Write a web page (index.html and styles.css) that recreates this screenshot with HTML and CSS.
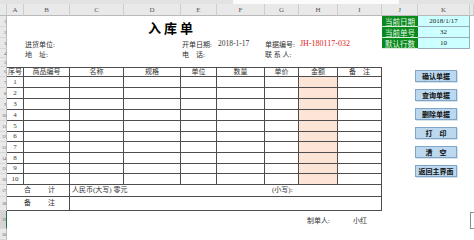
FILE: index.html
```html
<!DOCTYPE html>
<html lang="zh-CN">
<head>
    <meta charset="UTF-8">
    <meta name="viewport" content="width=device-width, initial-scale=1.0">
    <title>入库单</title>
    <link rel="stylesheet" href="styles.css">
</head>
<body>
    <div class="topbar"><div class="namebox"></div></div>
    <div class="sheet">
        <!-- column letters -->
        <div class="colhead"></div>
        <div class="colhead">A</div>
        <div class="colhead">B</div>
        <div class="colhead">C</div>
        <div class="colhead">D</div>
        <div class="colhead">E</div>
        <div class="colhead">F</div>
        <div class="colhead">G</div>
        <div class="colhead">H</div>
        <div class="colhead">I</div>
        <div class="colhead">J</div>
        <div class="colhead">K</div>
        <div class="colhead"></div>

        <!-- row numbers -->
        <div class="rowhead">1</div>
        <div class="rowhead">2</div>
        <div class="rowhead">3</div>
        <div class="rowhead">4</div>
        <div class="rowhead">5</div>
        <div class="rowhead">6</div>
        <div class="rowhead">7</div>
        <div class="rowhead">8</div>
        <div class="rowhead">9</div>
        <div class="rowhead">10</div>
        <div class="rowhead">11</div>
        <div class="rowhead">12</div>
        <div class="rowhead">13</div>
        <div class="rowhead">14</div>
        <div class="rowhead">15</div>
        <div class="rowhead">16</div>
        <div class="rowhead">17</div>
        <div class="rowhead">18</div>
        <div class="rowhead selected">19</div>
        <div class="rowhead">20</div>

        <div class="title">入库单</div>

        <div class="field supplier">进货单位:</div>
        <div class="field open-date">开单日期:</div>
        <div class="field open-date-val">2018-1-17</div>
        <div class="field bill-no">单据编号:</div>
        <div class="field bill-no-val">JH-180117-032</div>
        <div class="field address">地　址:</div>
        <div class="field phone">电　话:</div>
        <div class="field contact">联 系 人:</div>

        <div class="info">
            <div class="key">当前日期</div><div class="val">2018/1/17</div>
            <div class="key">当前单号</div><div class="val">32</div>
            <div class="key">默认行数</div><div class="val">10</div>
        </div>

        <table class="entry">
            <colgroup>
                <col style="width:17px"><col style="width:46px"><col style="width:54px">
                <col style="width:57px"><col style="width:36px"><col style="width:48px">
                <col style="width:34px"><col style="width:39px"><col style="width:44px">
            </colgroup>
            <tr class="hd">
                <td>序号</td><td>商品编号</td><td>名称</td><td>规格</td><td>单位</td><td>数量</td><td>单价</td><td>金额</td><td>备　注</td>
            </tr>
            <tr><td>1</td><td></td><td></td><td></td><td></td><td></td><td></td><td class="amt"></td><td></td></tr>
            <tr><td>2</td><td></td><td></td><td></td><td></td><td></td><td></td><td class="amt"></td><td></td></tr>
            <tr><td>3</td><td></td><td></td><td></td><td></td><td></td><td></td><td class="amt"></td><td></td></tr>
            <tr><td>4</td><td></td><td></td><td></td><td></td><td></td><td></td><td class="amt"></td><td></td></tr>
            <tr><td>5</td><td></td><td></td><td></td><td></td><td></td><td></td><td class="amt"></td><td></td></tr>
            <tr class="low"><td>6</td><td></td><td></td><td></td><td></td><td></td><td></td><td class="amt"></td><td></td></tr>
            <tr><td>7</td><td></td><td></td><td></td><td></td><td></td><td></td><td class="amt"></td><td></td></tr>
            <tr><td>8</td><td></td><td></td><td></td><td></td><td></td><td></td><td class="amt"></td><td></td></tr>
            <tr class="low"><td>9</td><td></td><td></td><td></td><td></td><td></td><td></td><td class="amt"></td><td></td></tr>
            <tr><td>10</td><td></td><td></td><td></td><td></td><td></td><td></td><td class="amt"></td><td></td></tr>
            <tr class="sum">
                <td colspan="2" class="spread">合　　计</td>
                <td colspan="4" class="caps">人民币(大写) 零元</td>
                <td colspan="3" class="lower">(小写):</td>
            </tr>
            <tr class="note">
                <td colspan="2" class="spread">备　　注</td>
                <td colspan="7"></td>
            </tr>
        </table>

        <div class="actions">
            <button class="btn">确认单据</button>
            <button class="btn">查询单据</button>
            <button class="btn">删除单据</button>
            <button class="btn">打　印</button>
            <button class="btn">清　空</button>
            <button class="btn">返回主界面</button>
        </div>

        <div class="field signer">制单人:</div>
        <div class="field signer-name">小红</div>
        <div class="stub"></div>
    </div>
</body>
</html>
```

FILE: styles.css
```css
*{
    margin:0;
    padding:0;
    box-sizing:border-box;
}
body{
    width:474px;
    height:240px;
    overflow:hidden;
    background:#fff;
    font-family:"Liberation Serif","Noto Sans CJK SC",serif;
    font-size:7px;
    color:#333;
}
.topbar{
    display:flex;
    height:4px;
    background:#e2e2e2;
}
.namebox{
    margin-left:233px;
    width:166px;
    background:#fbfbfb;
}
.sheet{
    display:grid;
    grid-template-columns:7px 17px 46px 54px 57px 36px 48px 34px 39px 44px 36px 52px 4px;
    grid-template-rows:12px 11px 11px 11px 9px 9px 10px 11px 11px 11px 11px 11px 10px 11px 11px 10px 11px 12px 14px 18px 11px;
}
.colhead{
    display:flex;
    align-items:center;
    justify-content:center;
    background:#e9e9e9;
    border-right:1px solid #cecece;
    border-bottom:1px solid #bababa;
    color:#555;
    font-size:7px;
}
.rowhead{
    grid-column:1;
    display:flex;
    align-items:center;
    justify-content:flex-end;
    background:#e9e9e9;
    border-right:1px solid #bababa;
    border-bottom:1px solid #d8d8d8;
    color:#666;
    font-size:4.5px;
    letter-spacing:-0.3px;
}
.rowhead.selected{
    background:#d4d4d4;
    border-right-color:#217346;
}

.title{
    grid-area:2 / 5 / 4 / 7;
    display:flex;
    align-items:center;
    justify-content:center;
    padding-left:3px;
    font-size:13px;
    font-weight:bold;
    letter-spacing:3px;
    color:#000;
}
.field{
    display:flex;
    align-items:center;
    white-space:nowrap;
    padding-left:1px;
}
.supplier{ grid-area:4 / 3; }
.open-date{ grid-area:4 / 6; }
.open-date-val{ grid-area:4 / 7; font-size:7.5px; }
.bill-no{ grid-area:4 / 8; padding-left:0; }
.bill-no-val{ grid-area:4 / 9 / 5 / 11; color:#e41b1b; font-size:8px; }
.address{ grid-area:5 / 3; }
.phone{ grid-area:5 / 6; }
.contact{ grid-area:5 / 8; padding-left:0; }

.info{
    grid-area:2 / 11 / 5 / 13;
    display:grid;
    grid-template-columns:36px 52px;
    grid-template-rows:repeat(3, 11px);
}
.info .key{
    display:flex;
    align-items:center;
    justify-content:center;
    background:#0a8a1e;
    border-bottom:1px solid #d8eed8;
    color:#e9f6e9;
    font-size:7.5px;
}
.info .val{
    display:flex;
    align-items:center;
    justify-content:center;
    background:#ccffff;
    border-right:1px solid #9ab;
    border-bottom:1px solid #9ab;
    color:#222;
}

.entry{
    grid-area:7 / 2 / 20 / 11;
    width:375px;
    table-layout:fixed;
    border-collapse:separate;
    border-spacing:0;
    align-self:start;
}
.entry tr{
    height:11px;
}
.entry tr.hd,
.entry tr.low{
    height:10px;
}
.entry tr.sum{
    height:12px;
}
.entry tr.note{
    height:14px;
}
.entry td{
    padding:0;
    line-height:7px;
    text-align:center;
    border-right:1px solid #4d4d4d;
    border-bottom:1px solid #4d4d4d;
    overflow:hidden;
    white-space:nowrap;
}
.entry .hd td{
    border-top:1px solid #4d4d4d;
}
.entry .amt{
    background:#fce4d6;
}
.entry .spread{
    padding-left:4px;
    letter-spacing:1px;
}
.entry .caps{
    text-align:left;
    padding-left:2px;
    border-right:none;
}
.entry .lower{
    text-align:left;
    padding-left:7px;
}

.actions{
    grid-area:7 / 11 / 19 / 13;
    display:flex;
    flex-direction:column;
    gap:7px;
    padding:3px 0 0 33px;
}
.btn{
    width:42px;
    height:12px;
    padding:0;
    background:#bcd8ee;
    border:1px solid #7fa6c8;
    box-shadow:1px 1px 0 #d6e2ec;
    font-family:"Liberation Sans","Noto Sans CJK SC",sans-serif;
    font-size:7px;
    font-weight:bold;
    color:#111;
}

.signer{ grid-area:20 / 9; padding-left:8px; }
.signer-name{ grid-area:20 / 10; padding-left:15px; }
.stub{
    grid-area:20 / 13;
    margin-top:1px;
    border:1px solid #8a8a8a;
    border-right:none;
}
```
